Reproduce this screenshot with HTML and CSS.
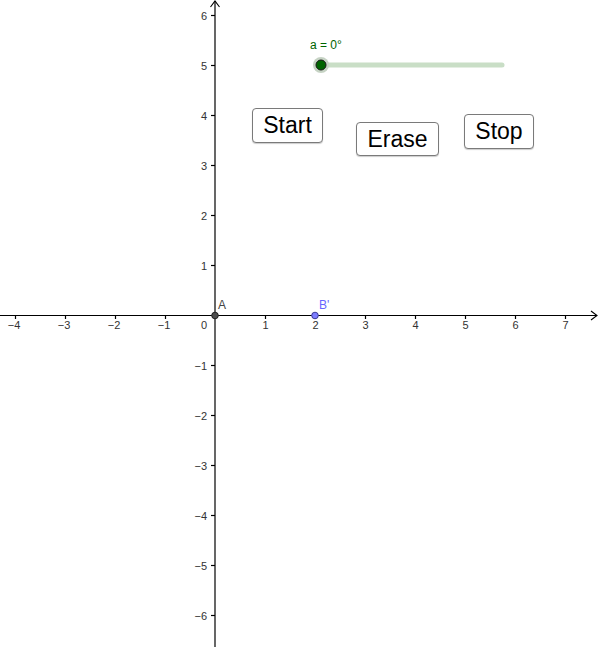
FILE: index.html
```html
<!DOCTYPE html>
<html>
<head>
<meta charset="utf-8">
<link rel="stylesheet" href="styles.css">
</head>
<body>
<div class="canvas">
<svg class="graph" width="600" height="647" viewBox="0 0 600 647">
  <g class="axes">
    <line x1="0" y1="315.5" x2="597" y2="315.5"/>
    <line x1="215" y1="1" x2="215" y2="647"/>
    <polyline class="arrow" points="591,311 597,315.5 591,320"/>
    <polyline class="arrow" points="210.5,7 215,1 219.5,7"/>
  </g>
  <g class="ticks">
    <line x1="15.5" y1="315" x2="15.5" y2="319"/>
    <line x1="65.5" y1="315" x2="65.5" y2="319"/>
    <line x1="115.5" y1="315" x2="115.5" y2="319"/>
    <line x1="165.5" y1="315" x2="165.5" y2="319"/>
    <line x1="265.5" y1="315" x2="265.5" y2="319"/>
    <line x1="315.5" y1="315" x2="315.5" y2="319"/>
    <line x1="365.5" y1="315" x2="365.5" y2="319"/>
    <line x1="415.5" y1="315" x2="415.5" y2="319"/>
    <line x1="465.5" y1="315" x2="465.5" y2="319"/>
    <line x1="515.5" y1="315" x2="515.5" y2="319"/>
    <line x1="565.5" y1="315" x2="565.5" y2="319"/>
    <line x1="211" y1="15.5" x2="215" y2="15.5"/>
    <line x1="211" y1="65.5" x2="215" y2="65.5"/>
    <line x1="211" y1="115.5" x2="215" y2="115.5"/>
    <line x1="211" y1="165.5" x2="215" y2="165.5"/>
    <line x1="211" y1="215.5" x2="215" y2="215.5"/>
    <line x1="211" y1="265.5" x2="215" y2="265.5"/>
    <line x1="211" y1="365.5" x2="215" y2="365.5"/>
    <line x1="211" y1="415.5" x2="215" y2="415.5"/>
    <line x1="211" y1="465.5" x2="215" y2="465.5"/>
    <line x1="211" y1="515.5" x2="215" y2="515.5"/>
    <line x1="211" y1="565.5" x2="215" y2="565.5"/>
    <line x1="211" y1="615.5" x2="215" y2="615.5"/>
  </g>
  <g class="xlabels">
    <text x="14" y="329">−4</text>
    <text x="64" y="329">−3</text>
    <text x="114" y="329">−2</text>
    <text x="164" y="329">−1</text>
    <text x="265.5" y="329">1</text>
    <text x="315.5" y="329">2</text>
    <text x="365.5" y="329">3</text>
    <text x="415.5" y="329">4</text>
    <text x="465.5" y="329">5</text>
    <text x="515.5" y="329">6</text>
    <text x="565.5" y="329">7</text>
  </g>
  <g class="ylabels">
    <text x="207" y="19.5">6</text>
    <text x="207" y="69.5">5</text>
    <text x="207" y="119.5">4</text>
    <text x="207" y="169.5">3</text>
    <text x="207" y="219.5">2</text>
    <text x="207" y="269.5">1</text>
    <text x="207" y="329">0</text>
    <text x="207" y="369.5">−1</text>
    <text x="207" y="419.5">−2</text>
    <text x="207" y="469.5">−3</text>
    <text x="207" y="519.5">−4</text>
    <text x="207" y="569.5">−5</text>
    <text x="207" y="619.5">−6</text>
  </g>
  <g class="slider">
    <line class="track" x1="321" y1="65" x2="502" y2="65"/>
    <circle class="halo" cx="321" cy="65" r="8"/>
    <circle class="knob" cx="321" cy="65" r="5"/>
    <text class="slabel" x="310" y="49">a = 0°</text>
  </g>
  <circle class="pointA" cx="215" cy="315.5" r="3.3"/>
  <text class="labelA" x="218" y="309">A</text>
  <circle class="pointB" cx="315" cy="315.5" r="3.3"/>
  <text class="labelB" x="319" y="309">B'</text>
</svg>
<button class="btn btn-start">Start</button>
<button class="btn btn-erase">Erase</button>
<button class="btn btn-stop">Stop</button>
</div>
</body>
</html>
```
FILE: styles.css
```css
html, body {
  margin: 0;
  padding: 0;
  background: #ffffff;
}
.canvas {
  position: relative;
  width: 600px;
  height: 647px;
  overflow: hidden;
  font-family: "Liberation Sans", Arial, sans-serif;
}
.graph {
  display: block;
}
.axes line, .ticks line {
  stroke: #000;
  stroke-width: 1.2;
}
.arrow {
  fill: none;
  stroke: #000;
  stroke-width: 1.1;
}
.xlabels text, .ylabels text {
  font-family: "Liberation Sans", Arial, sans-serif;
  font-size: 11px;
  fill: #333;
}
.xlabels text {
  text-anchor: middle;
}
.ylabels text {
  text-anchor: end;
}
.track {
  stroke: #c9dec6;
  stroke-width: 5;
  stroke-linecap: round;
}
.halo {
  fill: #c6d3c4;
}
.knob {
  fill: #006400;
  stroke: #1a1a1a;
  stroke-width: 1;
}
.slabel {
  font-family: "Liberation Sans", Arial, sans-serif;
  font-size: 12px;
  fill: #006400;
}
.pointA {
  fill: #4d4d4d;
  stroke: #222;
  stroke-width: 1;
}
.labelA {
  font-family: "Liberation Sans", Arial, sans-serif;
  font-size: 12px;
  fill: #444;
}
.pointB {
  fill: #7d7dff;
  stroke: #3c3c99;
  stroke-width: 1;
}
.labelB {
  font-family: "Liberation Sans", Arial, sans-serif;
  font-size: 12px;
  fill: #6666ff;
}
.btn {
  position: absolute;
  box-sizing: border-box;
  margin: 0;
  padding: 0;
  background: #ffffff;
  border: 1px solid #7a7a7a;
  border-radius: 4px;
  box-shadow: 0 1px 1px rgba(0,0,0,0.2);
  font-family: "Liberation Sans", Arial, sans-serif;
  font-size: 23px;
  color: #000;
  line-height: 1;
  display: flex;
  align-items: center;
  justify-content: center;
}
.btn-start {
  left: 252px;
  top: 108px;
  width: 71px;
  height: 35px;
}
.btn-erase {
  left: 356px;
  top: 122px;
  width: 83px;
  height: 34px;
}
.btn-stop {
  left: 464px;
  top: 114px;
  width: 70px;
  height: 35px;
}
```
